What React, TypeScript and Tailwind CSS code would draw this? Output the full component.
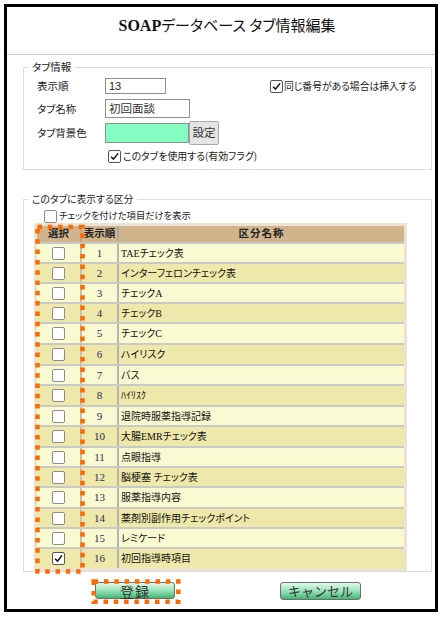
import React from "react";

const rows: string[] = [
  "TAEチェック表",
  "インターフェロンチェック表",
  "チェックA",
  "チェックB",
  "チェックC",
  "ハイリスク",
  "パス",
  "ﾊｲﾘｽｸ",
  "退院時服薬指導記録",
  "大腸EMRチェック表",
  "点眼指導",
  "脳梗塞 チェック表",
  "服薬指導内容",
  "薬剤別副作用チェックポイント",
  "レミケード",
  "初回指導時項目",
];
const tall = [false, false, false, false, true, true, false, true, false, true, false, false, true, false, false, true];

function Box({ checked = false }: { checked?: boolean }) {
  return (
    <span
      className={
        "inline-flex shrink-0 w-[13px] h-[13px] items-center justify-center border bg-white rounded-[2px] " +
        (checked ? "border-[#555]" : "border-[#8c8c8c]")
      }
    >
      {checked && (
        <svg viewBox="0 0 12 12" className="w-[11px] h-[11px]">
          <path d="M2.3 6.2 L4.9 8.9 L9.9 2.6" stroke="#111" strokeWidth="1.7" fill="none" />
        </svg>
      )}
    </span>
  );
}

export default function App() {
  return (
    <div className="relative w-[442px] h-[618px] bg-white p-[4px] text-[#222] font-['Noto_Sans_CJK_JP',sans-serif] [font-feature-settings:'palt']">
      <div className="w-[434px] h-[608px] border-[3px] border-black flex flex-col">
        {/* header */}
        <div className="h-[48px] shrink-0 border-b border-[#c8c8c8] flex justify-center pt-[7px] pl-[12px]">
          <div className="leading-[22px] text-[#111] flex items-baseline">
            <span className="font-['Liberation_Serif',serif] font-bold text-[16px]">SOAP</span>
            <span className="text-[15px]">データベース タブ情報編集</span>
          </div>
        </div>

        {/* fieldset 1 */}
        <fieldset className="mt-[5px] ml-[16px] mr-[3px] border border-[#dcdcdc] pb-[6px]">
          <legend className="ml-[4px] px-[4px] text-[10.5px] leading-[14px]">タブ情報</legend>
          <div className="pl-[13px] flex flex-col text-[10.5px]">
            <div className="mt-[4px] h-[16px] flex items-center">
              <span className="w-[68px]">表示順</span>
              <span className="w-[61px] h-[16px] border border-[#8e8e8e] flex items-center pl-[3px] text-[11px] font-['Liberation_Sans',sans-serif]">
                13
              </span>
              <span className="ml-[104px] flex items-center gap-[1px]">
                <Box checked />
                <span className="text-[9.8px]">同じ番号がある場合は挿入する</span>
              </span>
            </div>
            <div className="mt-[5px] h-[19px] flex items-center">
              <span className="w-[68px]">タブ名称</span>
              <span className="w-[85px] h-[19px] border border-[#8e8e8e] flex items-center pl-[3px] text-[11.5px] text-[#333]">
                初回面談
              </span>
            </div>
            <div className="mt-[3px] h-[24px] flex items-center">
              <span className="w-[68px]">タブ背景色</span>
              <span className="w-[84px] h-[20px] border border-[#8e8e8e] bg-[#84fdc2]" />
              <span className="w-[30px] h-[24px] border border-[#a8a8a8] bg-[#e4e4e4] flex items-center justify-center text-[11.5px] text-[#333] rounded-[2px]">
                設定
              </span>
            </div>
            <div className="mt-[4px] h-[14px] flex items-center ml-[71px] gap-[2px]">
              <Box checked />
              <span className="text-[9.9px]">このタブを使用する(有効フラグ)</span>
            </div>
          </div>
        </fieldset>

        {/* fieldset 2 */}
        <fieldset className="mt-[22px] ml-[16px] mr-[3px] border border-[#dcdcdc]">
          <legend className="ml-[4px] px-[4px] text-[9.8px] leading-[14px]">このタブに表示する区分</legend>
          <div className="mt-[3px] h-[14px] flex items-center pl-[20px] gap-[2px] text-[9.3px]">
            <Box />
            <span>チェックを付けた項目だけを表示</span>
          </div>
          <div className="ml-[10px] w-[373px] border-[3px] border-[#ece3d4] text-[10px] font-['Liberation_Serif','Noto_Sans_CJK_JP',serif]">
            <div className="h-[16px] flex bg-[#d2b48c] font-bold text-[#222] text-[10.5px]">
              <div className="w-[45px] border-r-2 border-[#c4a47c] flex items-center justify-center">選択</div>
              <div className="w-[37px] border-r-2 border-[#a8a8a8] flex items-center justify-center">表示順</div>
              <div className="flex-1 flex items-center justify-center tracking-[1px]">区分名称</div>
            </div>
            {rows.map((name, i) => (
              <div
                key={i}
                className={
                  "flex border-t-2 border-[#c9c9c6] " +
                  (tall[i] ? "h-[21px] " : "h-[20px] ") +
                  (i % 2 === 0 ? "bg-[#fafad2]" : "bg-[#eee8aa]")
                }
              >
                <div className="w-[45px] border-r-2 border-[#c2c2bc] flex items-center justify-center">
                  <Box checked={i === 15} />
                </div>
                <div className="w-[37px] border-r-2 border-[#b4b4b4] flex items-center justify-center text-[#1f2d5c] text-[11px]">
                  {i + 1}
                </div>
                <div className="flex-1 flex items-center pl-[2px] text-[#111]">{name}</div>
              </div>
            ))}
          </div>
        </fieldset>

        {/* buttons */}
        <div className="mt-[8px] h-[21px] flex items-center">
          <button className="ml-[88px] w-[80px] h-[17px] border border-[#6f6f6f] rounded-[3px] bg-gradient-to-b from-[#e2f8ea] via-[#98e2b8] to-[#3fb676] text-[14px] leading-none text-[#333] tracking-[1px] flex items-center justify-center [font-feature-settings:normal]">
            登録
          </button>
          <button className="ml-[105px] w-[81px] h-[18px] border border-[#6f6f6f] rounded-[3px] bg-gradient-to-b from-[#e2f8ea] via-[#98e2b8] to-[#3fb676] text-[13px] leading-none text-[#333] flex items-center justify-center [font-feature-settings:normal]">
            キャンセル
          </button>
        </div>
      </div>

      {/* orange dotted annotation overlay */}
      <svg className="absolute left-0 top-0 w-[442px] h-[618px] pointer-events-none" viewBox="0 0 442 618">
        <rect x="37.5" y="227" width="45" height="344.5" fill="none" stroke="#ff6a00" strokeWidth="4.5" strokeDasharray="4.5 5.8" />
        <rect x="93.7" y="581.5" width="84.6" height="20.2" fill="none" stroke="#ff6a00" strokeWidth="4.5" strokeDasharray="4.5 5.8" />
      </svg>
    </div>
  );
}
